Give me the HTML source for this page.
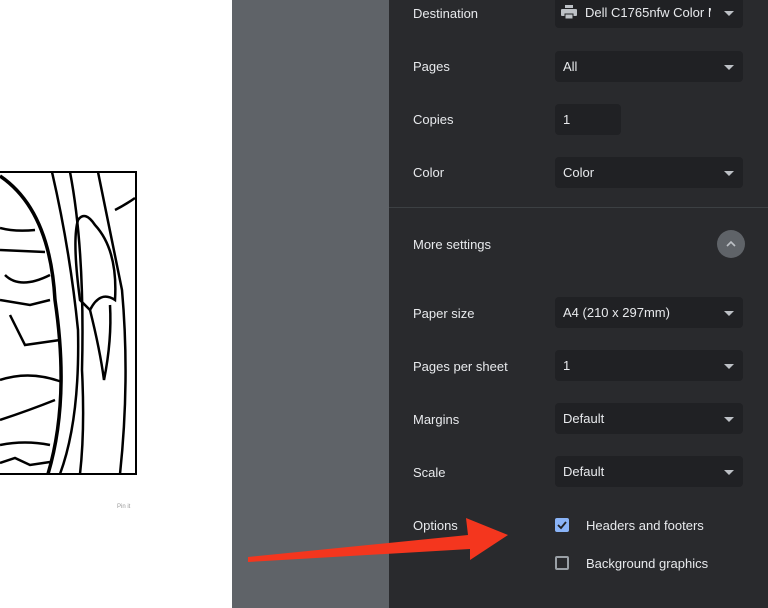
<!DOCTYPE html>
<html><head><style>
body{margin:0;width:768px;height:608px;overflow:hidden;position:relative;font-family:"Liberation Sans",sans-serif;background:#fff}
.gray{position:absolute;left:232px;top:0;width:157px;height:608px;background:#5f6368}
.panel{position:absolute;left:389px;top:0;width:379px;height:608px;background:#292a2d;color:#e8eaed;font-size:13px}
.lbl{position:absolute;left:24px}
.dd{position:absolute;left:166px;width:188px;height:31px;background:#202124;border-radius:4px;box-sizing:border-box;padding-left:8px;line-height:31px;white-space:nowrap}
.dd:after{content:"";position:absolute;right:9px;top:14px;border-left:5px solid transparent;border-right:5px solid transparent;border-top:5px solid #bdc1c6}
.nod:after{display:none}
.cb{position:absolute;left:166px;width:14px;height:14px;border-radius:2px;box-sizing:border-box}
</style></head><body>
<svg style="position:absolute;left:0;top:0" width="232" height="608">
<g fill="none" stroke="#000" stroke-width="2.5">
<rect x="-5" y="172" width="141" height="302" stroke-width="2"/>
<path d="M0 176 Q50 210 55 300 Q70 400 48 474" stroke-width="3.5"/>
<path d="M52 172 Q70 250 78 330 Q80 420 60 474"/>
<path d="M70 172 Q85 250 82 370 Q85 430 80 474"/>
<path d="M98 172 Q112 240 122 290 Q130 380 120 474"/>
<path d="M78 220 Q72 240 80 300 L90 310 Q100 290 115 300 Q118 250 95 225 Q85 210 78 220Z"/>
<path d="M90 310 Q100 350 104 380 Q112 340 110 305"/>
<path d="M0 228 Q15 232 35 230"/>
<path d="M0 250 L45 252"/>
<path d="M5 275 Q20 290 50 275"/>
<path d="M0 300 L30 305 L50 300"/>
<path d="M10 315 L25 345 L60 340"/>
<path d="M0 380 Q30 370 62 382"/>
<path d="M0 420 Q30 410 55 400"/>
<path d="M0 445 Q25 440 50 445"/>
<path d="M0 463 L15 458 L30 465 L50 462"/>
<path d="M115 210 Q125 205 135 198"/>
</g>
<text x="117" y="508" font-size="6" fill="#999">Pin it</text>
</svg>
<div class="gray"></div>
<div class="panel">
<div class="lbl" style="top:6px">Destination</div>
<div class="dd" style="top:-3px;padding-left:30px;overflow:hidden"><svg style="position:absolute;left:6px;top:8px" width="16" height="15"><rect x="4" y="0" width="8" height="3" fill="#bdc1c6"/><rect x="0" y="4" width="16" height="7" rx="1" fill="#bdc1c6"/><rect x="4" y="9" width="8" height="5" fill="#bdc1c6" stroke="#202124"/></svg><span style="display:inline-block;width:126px;overflow:hidden;vertical-align:top">Dell C1765nfw Color M</span></div>
<div class="lbl" style="top:59px">Pages</div>
<div class="dd" style="top:51px">All</div>
<div class="lbl" style="top:112px">Copies</div>
<div class="dd nod" style="top:104px;width:66px">1</div>
<div class="lbl" style="top:165px">Color</div>
<div class="dd" style="top:157px">Color</div>
<div style="position:absolute;left:0;top:207px;width:379px;height:1px;background:#3c4043"></div>
<div class="lbl" style="top:237px">More settings</div>
<div style="position:absolute;left:328px;top:230px;width:28px;height:28px;border-radius:50%;background:#5f6368"><svg width="28" height="28"><path d="M10 16 L14 12 L18 16" stroke="#bdc1c6" stroke-width="1.6" fill="none"/></svg></div>
<div class="lbl" style="top:306px">Paper size</div>
<div class="dd" style="top:297px">A4 (210 x 297mm)</div>
<div class="lbl" style="top:359px">Pages per sheet</div>
<div class="dd" style="top:350px">1</div>
<div class="lbl" style="top:412px">Margins</div>
<div class="dd" style="top:403px">Default</div>
<div class="lbl" style="top:465px">Scale</div>
<div class="dd" style="top:456px">Default</div>
<div class="lbl" style="top:518px">Options</div>
<div class="cb" style="top:518px;background:#8ab4f8"><svg width="14" height="14"><path d="M3 7 L6 10 L11 4" stroke="#202124" stroke-width="1.8" fill="none"/></svg></div>
<div style="position:absolute;left:197px;top:518px">Headers and footers</div>
<div class="cb" style="top:556px;border:2px solid #9aa0a6"></div>
<div style="position:absolute;left:197px;top:556px">Background graphics</div>
</div>
<svg style="position:absolute;left:0;top:0" width="768" height="608">
<path d="M248 562 L248 557 L468 535 L466 518 L508 535 L470 560 L470 549 Z" fill="#f4361e"/>
</svg>
</body></html>
